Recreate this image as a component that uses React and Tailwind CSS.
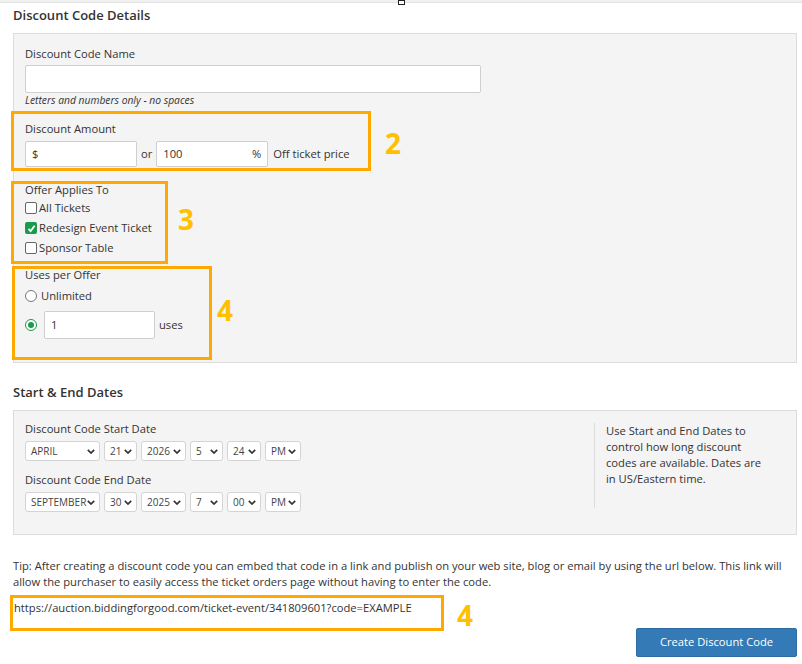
import React from "react";

const Chevron = () => (
  <svg width="8" height="5" viewBox="0 0 8 5" className="shrink-0">
    <polyline points="0.8,0.8 4,4 7.2,0.8" fill="none" stroke="#333" strokeWidth="1.7" />
  </svg>
);

function Select({ value, w }) {
  return (
    <div
      className={`flex h-[20px] items-center justify-between rounded-[3px] border border-[#d4d4d4] bg-white pl-[5px] pr-[4px] text-[10px] text-[#444] ${w}`}
    >
      <span>{value}</span>
      <Chevron />
    </div>
  );
}

function Checkbox({ checked }) {
  if (checked) {
    return (
      <span className="mr-[2px] flex h-[12px] w-[12px] items-center justify-center rounded-[2px] bg-[#1a9a4b]">
        <svg width="9" height="9" viewBox="0 0 9 9">
          <polyline points="1.5,4.8 3.6,7 7.6,1.8" fill="none" stroke="white" strokeWidth="1.8" />
        </svg>
      </span>
    );
  }
  return <span className="mr-[2px] h-[12px] w-[12px] rounded-[2px] border border-[#666] bg-white" />;
}

function Radio({ checked }) {
  if (checked) {
    return (
      <span className="flex h-[12px] w-[12px] items-center justify-center rounded-full border border-[#1a9a4b] bg-white">
        <span className="h-[6px] w-[6px] rounded-full bg-[#1a9a4b]" />
      </span>
    );
  }
  return <span className="h-[12px] w-[12px] rounded-full border border-[#777] bg-white" />;
}

export default function App() {
  return (
    <div
      className="relative h-[664px] w-[802px] overflow-hidden bg-white text-[11.2px] text-[#333]"
      style={{ fontFamily: '"Open Sans", "Liberation Sans", sans-serif' }}
    >
      {/* top strip */}
      <div className="h-[3px] border-b border-[#e2e2e2] bg-[#f0f0f0]" />

      <div className="pl-[13px] pr-[5px]">
        <h2 className="mt-[2px] text-[13px] font-semibold leading-[20px] text-[#333]">Discount Code Details</h2>

        {/* Panel 1 */}
        <div className="mt-[8px] border border-[#dcdcdc] bg-[#f4f4f4] pb-[23px] pl-[11px] pt-[11px]">
          <div className="leading-[17px]">Discount Code Name</div>
          <div className="mt-[3px] h-[28px] w-[456px] rounded-[2px] border border-[#cfcfcf] bg-white" />
          <div className="mt-[0px] text-[10.3px] italic leading-[15px]">Letters and numbers only - no spaces</div>

          <div className="mt-[12px] leading-[17px]">Discount Amount</div>
          <div className="mt-[4px] flex items-center">
            <div className="flex h-[26px] w-[112px] items-center rounded-[2px] border border-[#cfcfcf] bg-white pl-[6px]">
              $
            </div>
            <span className="mx-[4px]">or</span>
            <div className="flex h-[26px] w-[112px] items-center justify-between rounded-[2px] border border-[#cfcfcf] bg-white pl-[6px] pr-[6px]">
              <span>100</span>
              <span>%</span>
            </div>
            <span className="ml-[5px]">Off ticket price</span>
          </div>

          <div className="mt-[14px] leading-[17px]">Offer Applies To</div>
          <div className="flex flex-col">
            <label className="flex h-[20px] items-center">
              <Checkbox />
              <span>All Tickets</span>
            </label>
            <label className="flex h-[20px] items-center">
              <Checkbox checked />
              <span>Redesign Event Ticket</span>
            </label>
            <label className="flex h-[20px] items-center">
              <Checkbox />
              <span>Sponsor Table</span>
            </label>
          </div>

          <div className="mt-[8px] leading-[17px]">Uses per Offer</div>
          <label className="mt-[3px] flex h-[20px] items-center gap-[4px]">
            <Radio />
            <span>Unlimited</span>
          </label>
          <div className="mt-[5px] flex items-center">
            <Radio checked />
            <div className="ml-[7px] flex h-[28px] w-[111px] items-center rounded-[2px] border border-[#cfcfcf] bg-white pl-[6px]">
              1
            </div>
            <span className="ml-[4px]">uses</span>
          </div>
        </div>

        <h2 className="mt-[19px] text-[13px] font-semibold leading-[20px] text-[#333]">Start &amp; End Dates</h2>

        {/* Panel 2 */}
        <div className="mt-[8px] flex border border-[#dcdcdc] bg-[#f4f4f4] pb-[22px] pl-[11px] pt-[9px]">
          <div className="flex-1">
            <div className="leading-[17px]">Discount Code Start Date</div>
            <div className="mt-[4px] flex gap-[4px]">
              <Select value="APRIL" w="w-[75px]" />
              <Select value="21" w="w-[33px]" />
              <Select value="2026" w="w-[45px]" />
              <Select value="5" w="w-[33px]" />
              <Select value="24" w="w-[34px]" />
              <Select value="PM" w="w-[36px]" />
            </div>
            <div className="mt-[10px] leading-[17px]">Discount Code End Date</div>
            <div className="mt-[4px] flex gap-[4px]">
              <Select value="SEPTEMBER" w="w-[75px]" />
              <Select value="30" w="w-[33px]" />
              <Select value="2025" w="w-[45px]" />
              <Select value="7" w="w-[33px]" />
              <Select value="00" w="w-[34px]" />
              <Select value="PM" w="w-[36px]" />
            </div>
          </div>
          <div className="mt-[3px] h-[85px] w-[202px] border-l border-[#dcdcdc] pl-[11px] leading-[16px]">
            <p className="w-[160px]">Use Start and End Dates to control how long discount codes are available. Dates are in US/Eastern time.</p>
          </div>
        </div>

        <p className="mt-[23px] leading-[16px]">
          Tip: After creating a discount code you can embed that code in a link and publish on your web site, blog or email by using the url below. This link will allow the purchaser to easily access the ticket orders page without having to enter the code.
        </p>
        <div className="mt-[10px] pl-[1px] leading-[16px]">https://auction.biddingforgood.com/ticket-event/341809601?code=EXAMPLE</div>

        <div className="flex justify-end">
          <button className="mt-[12px] h-[29px] w-[161px] rounded-[2px] border border-[#2e6da4] bg-[#337ab7] text-[11.2px] text-white">
            Create Discount Code
          </button>
        </div>
      </div>

      {/* selection handle */}
      <div className="absolute left-[398px] top-0 h-[5px] w-[7px] border border-[#222] bg-white" />

      {/* annotation overlays */}
      <div className="pointer-events-none absolute left-[11px] top-[111px] h-[60px] w-[360px] border-[3px] border-[#ffa800]" />
      <div className="absolute left-[385px] top-[124px] text-[28px] font-bold leading-[38px] text-[#ffc000]">2</div>

      <div className="pointer-events-none absolute left-[11px] top-[181px] h-[83px] w-[157px] border-[3px] border-[#ffa800]" />
      <div className="absolute left-[178px] top-[200px] text-[28px] font-bold leading-[38px] text-[#ffc000]">3</div>

      <div className="pointer-events-none absolute left-[12px] top-[266px] h-[94px] w-[200px] border-[3px] border-[#ffa800]" />
      <div className="absolute left-[217px] top-[291px] text-[28px] font-bold leading-[38px] text-[#ffc000]">4</div>

      <div className="pointer-events-none absolute left-[10px] top-[595px] h-[36px] w-[434px] border-[3px] border-[#ffa800]" />
      <div className="absolute left-[457px] top-[596px] text-[28px] font-bold leading-[38px] text-[#ffc000]">4</div>
    </div>
  );
}
